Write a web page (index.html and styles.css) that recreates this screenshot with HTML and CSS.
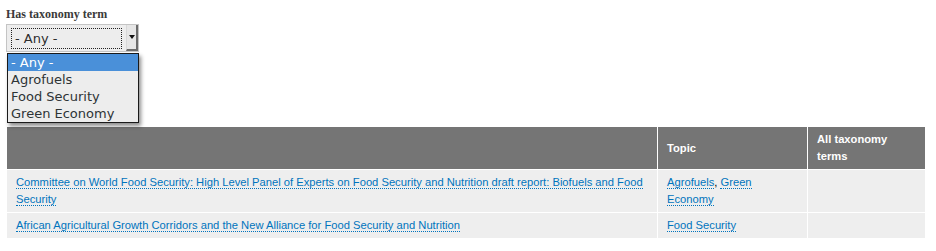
FILE: index.html
```html
<!DOCTYPE html>
<html>
<head>
<meta charset="utf-8">
<link rel="stylesheet" href="styles.css">
</head>
<body>
<div class="filter">
  <div class="filter-label">Has taxonomy term</div>
  <div class="combo">
    <div class="combo-field"><span class="combo-focus">- Any -</span></div>
    <div class="combo-button"><span class="arrow"></span></div>
    <ul class="combo-list">
      <li class="selected">- Any -</li>
      <li>Agrofuels</li>
      <li>Food Security</li>
      <li>Green Economy</li>
    </ul>
  </div>
</div>
<table class="views-table">
  <colgroup>
    <col class="c1"><col class="c2"><col class="c3">
  </colgroup>
  <thead>
    <tr><th></th><th>Topic</th><th>All taxonomy terms</th></tr>
  </thead>
  <tbody>
    <tr>
      <td class="title-cell"><a href="#">Committee on World Food Security: High Level Panel of Experts on Food Security and Nutrition draft report: Biofuels and Food Security</a></td>
      <td><a href="#">Agrofuels</a>, <a href="#">Green Economy</a></td>
      <td></td>
    </tr>
    <tr>
      <td class="title-cell"><a href="#">African Agricultural Growth Corridors and the New Alliance for Food Security and Nutrition</a></td>
      <td><a href="#">Food Security</a></td>
      <td></td>
    </tr>
  </tbody>
</table>
</body>
</html>
```
FILE: styles.css
```css
html, body {
  margin: 0;
  padding: 0;
  background: #fff;
}
body {
  padding: 7px 0 0 0;
}
.filter {
  padding-left: 6px;
  height: 120px;
}
.filter-label {
  font-family: "Liberation Serif", serif;
  font-weight: bold;
  font-size: 12px;
  line-height: 15px;
  color: #3a3a3a;
  height: 17px;
}
.combo {
  position: relative;
  display: flex;
  width: 133px;
  height: 28px;
  box-sizing: border-box;
  border: 1px solid #c4c4c4;
  background: #ededed;
  font-family: "DejaVu Sans", sans-serif;
  font-size: 13px;
  color: #2e2e2e;
}
.combo-field {
  flex: 1;
  padding: 3px 4px 2px 4px;
  display: flex;
}
.combo-focus {
  flex: 1;
  border: 1px dotted #222;
  padding-left: 3px;
  line-height: 19px;
}
.combo-button {
  width: 12px;
  box-sizing: border-box;
  border-left: 1px solid #d8d8d8;
  border-right: 2px solid #6a6a6a;
  border-bottom: 2px solid #6a6a6a;
  background: #e6e6e6;
  display: flex;
  align-items: center;
  justify-content: center;
}
.arrow {
  width: 0;
  height: 0;
  border-left: 3px solid transparent;
  border-right: 3px solid transparent;
  border-top: 4px solid #111;
  margin-top: -1px;
}
.combo-list {
  position: absolute;
  left: 0;
  top: 28px;
  width: 132px;
  margin: 0;
  padding: 0;
  list-style: none;
  box-sizing: border-box;
  border: 1px solid #1a1a1a;
  background: #ededed;
  box-shadow: 2px 3px 4px rgba(0, 0, 0, 0.45);
  z-index: 2;
}
.combo-list li {
  height: 17px;
  line-height: 17px;
  padding-left: 3px;
  color: #2e3436;
}
.combo-list li.selected {
  background: #4a90d9;
  color: #fff;
}
.views-table {
  margin-left: 7px;
  border-collapse: separate;
  border-spacing: 0;
  table-layout: fixed;
  width: 918px;
  font-family: "Liberation Sans", Arial, sans-serif;
  font-size: 11.2px;
  line-height: 17px;
}
.c1 { width: 650px; }
.c2 { width: 150px; }
.c3 { width: 118px; }
.views-table th {
  background: #757575;
  color: #fff;
  font-weight: bold;
  text-align: left;
  vertical-align: middle;
  padding: 4px 9px;
  height: 34px;
}
.views-table th + th,
.views-table td + td {
  border-left: 1px solid #fff;
}
.views-table td {
  background: #eeeeee;
  border-top: 1px solid #fff;
  padding: 4px 12px 4px 9px;
  vertical-align: top;
}
.views-table td.title-cell {
  padding-right: 4px;
}
.views-table a {
  color: #0074bd;
  text-decoration: none;
  border-bottom: 1px dotted #0074bd;
}
```
